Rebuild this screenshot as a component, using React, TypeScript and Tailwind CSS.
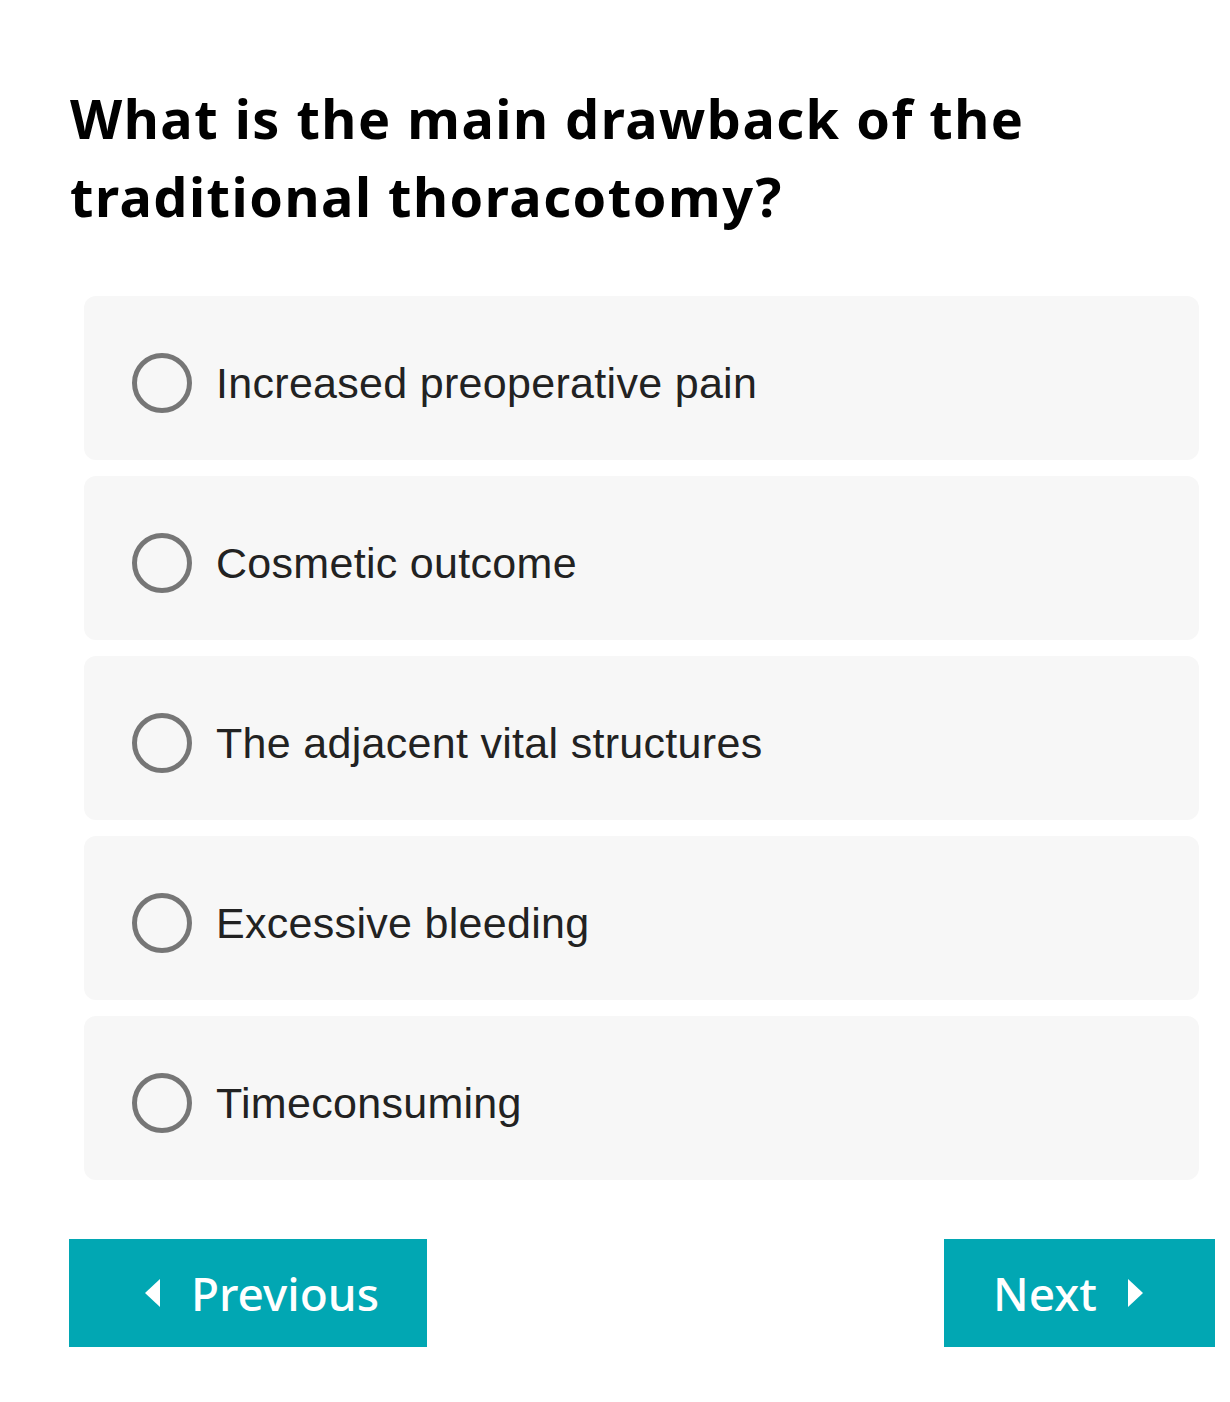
import React from "react";

const options = [
  "Increased preoperative pain",
  "Cosmetic outcome",
  "The adjacent vital structures",
  "Excessive bleeding",
  "Timeconsuming",
];

function Option({ label }: { label: string }) {
  return (
    <label className="flex h-[164px] items-center rounded-xl bg-[#f7f7f7] pl-[48px] pt-[10px] cursor-pointer">
      <span className="block h-[60px] w-[60px] shrink-0 rounded-full border-[5px] border-[#767676]" />
      <span className="ml-[24px] text-[43px] tracking-[0.3px] text-[#222] font-['Liberation_Sans',Arial,sans-serif]">
        {label}
      </span>
    </label>
  );
}

export default function App() {
  return (
    <div className="min-h-[1402px] w-[1230px] bg-white font-['Noto_Sans',sans-serif]">
      <div className="pl-[70px] pt-[79px]">
        <h1 className="w-[1000px] text-[54px] font-bold leading-[78px] tracking-[1.5px] text-black">
          What is the main drawback of the traditional thoracotomy?
        </h1>
      </div>

      <div className="mt-[61px] ml-[84px] mr-[31px] flex flex-col gap-[16px]">
        {options.map((o) => (
          <Option key={o} label={o} />
        ))}
      </div>

      <div className="mt-[59px] ml-[69px] mr-[15px] flex justify-between">
        <button className="flex h-[108px] w-[358px] items-center gap-[31px] pl-[76px] bg-[#01a7b3] text-[46px] font-medium text-white">
          <svg width="15" height="28" viewBox="0 0 15 28">
            <path d="M15 0 L0 14 L15 28 Z" fill="white" />
          </svg>
          <span>Previous</span>
        </button>
        <button className="flex h-[108px] w-[271px] items-center gap-[31px] pl-[49px] bg-[#01a7b3] text-[46px] font-medium text-white">
          <span>Next</span>
          <svg width="15" height="28" viewBox="0 0 15 28">
            <path d="M0 0 L15 14 L0 28 Z" fill="white" />
          </svg>
        </button>
      </div>
    </div>
  );
}
